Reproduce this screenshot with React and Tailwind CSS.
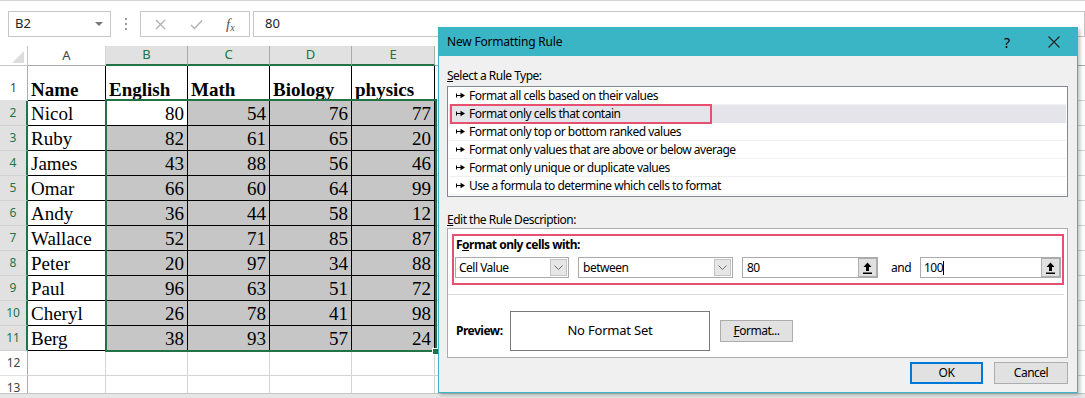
import React from 'react'

const tableHead = ['Name', 'English', 'Math', 'Biology', 'physics']
const tableRows = [
  ['Nicol', 80, 54, 76, 77],
  ['Ruby', 82, 61, 65, 20],
  ['James', 43, 88, 56, 46],
  ['Omar', 66, 60, 64, 99],
  ['Andy', 36, 44, 58, 12],
  ['Wallace', 52, 71, 85, 87],
  ['Peter', 20, 97, 34, 88],
  ['Paul', 96, 63, 51, 72],
  ['Cheryl', 26, 78, 41, 98],
  ['Berg', 38, 93, 57, 24],
]
// só as colunas visíveis levam letra; o resto fica atrás do diálogo
const letters = ['A', 'B', 'C', 'D', 'E', '', '', '', '', '', '', '', '']

const ruleTypes = [
  'Format all cells based on their values',
  'Format only cells that contain',
  'Format only top or bottom ranked values',
  'Format only values that are above or below average',
  'Format only unique or duplicate values',
  'Use a formula to determine which cells to format',
]

const Arrow = () => (
  <svg width="9" height="7" viewBox="0 0 9 7" className="shrink-0">
    <path d="M0.5 1.5 V5.5 M0.5 3.5 H5" stroke="#000" strokeWidth="1" />
    <polygon points="4.5,0.8 9,3.5 4.5,6.2" fill="#000" />
  </svg>
)

const Chevron = () => (
  <div className="w-[17px] h-[17px] mr-[1px] bg-[#e6e6e6] border border-[#c3c3c3] flex items-center justify-center">
    <svg width="9" height="5" viewBox="0 0 9 5">
      <path d="M0.5 0.5 L4.5 4.5 L8.5 0.5" stroke="#6d6d6d" strokeWidth="1" fill="none" />
    </svg>
  </div>
)

const CollapseBtn = () => (
  <div className="w-[19px] h-[19px] bg-[#e1e1e1] border border-[#adadad] flex items-center justify-center">
    <svg width="9" height="12" viewBox="0 0 9 12">
      <path d="M4.5 0.5 L0.5 5 H3 V9 H6 V5 H8.5 Z" fill="#000" />
      <rect x="0" y="10.5" width="9" height="1.5" fill="#000" />
    </svg>
  </div>
)

const colWidths = [28, 78, 82, 82, 82, 83, 82, 82, 82, 82, 82, 82, 82, 82]

const HeaderRow = () => (
  <div className="flex h-[20px]">
    <div className="w-[28px] shrink-0 bg-white border-r border-b border-[#c6c6c6] relative">
      <svg width="12" height="12" viewBox="0 0 12 12" className="absolute right-[3px] bottom-[2px]">
        <polygon points="12,0 12,12 0,12" fill="#dcdcdc" />
      </svg>
    </div>
    {letters.map((l, i) => {
      const sel = i >= 1 && i <= 4
      return (
        <div
          key={i}
          style={{ width: colWidths[i + 1] }}
          className={
            'shrink-0 flex items-center justify-center text-[13px] border-r ' +
            (sel
              ? 'bg-[#e1e1e1] text-[#217346] border-[#ababab] border-b-2 border-b-[#217346]'
              : 'bg-white text-[#444] border-[#d4d4d4] border-b border-b-[#ababab]')
          }
        >
          {l}
        </div>
      )
    })}
  </div>
)

const RowHead = ({ n, sel, h }) => (
  <div
    className={
      'w-[28px] shrink-0 flex items-end justify-center pb-[3px] text-[12px] border-b ' +
      (sel
        ? 'bg-[#e1e1e1] text-[#217346] border-b-[#d0d0d0] border-r-2 border-r-[#217346]'
        : 'bg-white text-[#444] border-b-[#e1e1e1] border-r border-r-[#ababab]') +
      (h ? ' h-[35px]' : ' h-[25px]')
    }
  >
    {n}
  </div>
)

const Filler = ({ h }) =>
  colWidths.slice(6).map((w, i) => (
    <div key={i} style={{ width: w }} className={'shrink-0 bg-white border-r border-b border-[#d4d4d4] ' + (h ? 'h-[35px]' : 'h-[25px]')} />
  ))

const Sheet = () => (
  <div className="relative h-[347px] overflow-hidden">
    <HeaderRow />
    {/* linha 1 - cabeçalho da tabela */}
    <div className="flex">
      <RowHead n={1} h />
      {tableHead.map((t, i) => (
        <div
          key={t}
          style={{ width: colWidths[i + 1] }}
          className="shrink-0 h-[35px] bg-white border-r border-b border-black flex items-end pl-[3px] pb-[1px] leading-none font-bold text-[19px] font-['Liberation_Serif',serif] text-black"
        >
          {t}
        </div>
      ))}
      <Filler h />
    </div>
    {tableRows.map((r, ri) => (
      <div key={ri} className="flex">
        <RowHead n={ri + 2} sel />
        {r.map((v, ci) => {
          const shaded = ci > 0 && !(ri === 0 && ci === 1)
          return (
            <div
              key={ci}
              style={{ width: colWidths[ci + 1] }}
              className={
                'shrink-0 h-[25px] border-r border-b border-black flex items-center text-[19px] font-["Liberation_Serif",serif] text-black leading-none pt-[1px] ' +
                (ci === 0 ? 'pl-[3px] ' : 'justify-end pr-[3px] ') +
                (shaded ? 'bg-[#c6c6c6]' : 'bg-white')
              }
            >
              {v}
            </div>
          )
        })}
        <Filler />
      </div>
    ))}
    {[12, 13].map((n) => (
      <div key={n} className="flex">
        <RowHead n={n} />
        {colWidths.slice(1).map((w, i) => (
          <div key={i} style={{ width: w }} className="shrink-0 h-[25px] bg-white border-r border-b border-[#d4d4d4]" />
        ))}
      </div>
    ))}
    {/* seleção B2:E11 */}
    <div className="absolute left-[105px] top-[53px] w-[332px] h-[253px] border-2 border-[#217346] pointer-events-none" />
    <div className="absolute left-[432px] top-[302px] w-[7px] h-[7px] bg-[#217346] border border-white" />
  </div>
)

const FormulaBar = () => (
  <div className="h-[46px] border-t border-[#d4d4d4] bg-white flex items-start pt-[10px] pl-[8px] gap-0">
    <div className="w-[103px] h-[26px] border border-[#c6c6c6] flex items-center justify-between pl-[6px] pr-[7px] text-[13px] text-[#222]">
      <span>B2</span>
      <svg width="8" height="4" viewBox="0 0 8 4">
        <polygon points="0,0 8,0 4,4" fill="#777" />
      </svg>
    </div>
    <div className="w-[29px] h-[26px] flex flex-col items-center justify-center gap-[3px]">
      <div className="w-[2px] h-[2px] bg-[#999]" />
      <div className="w-[2px] h-[2px] bg-[#999]" />
      <div className="w-[2px] h-[2px] bg-[#999]" />
    </div>
    <div className="w-[110px] h-[26px] border border-[#c6c6c6] flex items-center pl-[14px]">
      <svg width="11" height="11" viewBox="0 0 11 11">
        <path d="M1 1 L10 10 M10 1 L1 10" stroke="#b0b0b0" strokeWidth="1.3" />
      </svg>
      <svg width="13" height="11" viewBox="0 0 13 11" className="ml-[24px]">
        <path d="M1 6 L4.5 9.5 L12 1.5" stroke="#b0b0b0" strokeWidth="1.4" fill="none" />
      </svg>
      <span className="ml-[23px] italic font-['Liberation_Serif',serif] text-[15px] text-[#555]">
        f<sub className="text-[10px]">x</sub>
      </span>
    </div>
    <div className="ml-[3px] flex-1 h-[26px] border border-[#c6c6c6] flex items-center pl-[11px] text-[13px] text-[#222]">
      80
    </div>
  </div>
)

const Dialog = () => (
  <div className="absolute left-[438px] top-[27px] w-[640px] h-[366px] border border-[#3ab5c5] bg-[#f0f0f0] shadow-[2px_2px_4px_rgba(0,0,0,0.25)] font-['Noto_Sans',sans-serif] text-[12px] text-black tracking-[-0.5px] flex flex-col">
    <div className="h-[28px] bg-[#3ab5c5] flex items-center pl-[8px] text-[12px] tracking-[-0.2px]">
      <span className="flex-1">New Formatting Rule</span>
      <span className="w-[14px] text-[14px] mr-[30px]">?</span>
      <svg width="12" height="12" viewBox="0 0 12 12" className="mr-[17px]">
        <path d="M0.5 0.5 L11.5 11.5 M11.5 0.5 L0.5 11.5" stroke="#222" strokeWidth="1.1" />
      </svg>
    </div>
    <div className="flex flex-col pl-[8px] pr-[9px]">
      <div className="h-[16px] mt-[12px] leading-[16px]">
        <span className="underline">S</span>elect a Rule Type:
      </div>
      <div className="relative mt-[2px] h-[111px] bg-white border border-[#828790] flex flex-col">
        {ruleTypes.map((t, i) => (
          <div
            key={t}
            className={
              'h-[18px] flex items-center gap-[4px] pl-[7px] mx-[1px] border-b ' +
              (i === 1 ? 'bg-[#e4e4ea] border-[#e4e4ea]' : 'border-[#f0f0f0]')
            }
          >
            <Arrow />
            <span>{t}</span>
          </div>
        ))}
        <div className="absolute left-[2px] top-[17px] w-[262px] h-[20px] border-2 border-[#e8506f]" />
      </div>
      <div className="h-[16px] mt-[15px] leading-[16px]">
        <span className="underline">E</span>dit the Rule Description:
      </div>
      <div className="h-[130px] bg-white border border-[#acacac] flex flex-col">
        <div className="mt-[5px] ml-[4px] mr-[3px] h-[51px] border-2 border-[#e8506f] flex flex-col pt-[1px]">
          <div className="h-[16px] leading-[16px] font-bold pl-[2px]">
            F<span className="underline">o</span>rmat only cells with:
          </div>
          <div className="mt-[4px] h-[21px] flex items-center pl-[1px]">
            <div className="w-[114px] h-[21px] border border-[#ababab] flex items-center justify-between pl-[3px]">
              <span>Cell Value</span>
              <Chevron />
            </div>
            <div className="ml-[9px] w-[155px] h-[21px] border border-[#ababab] flex items-center justify-between pl-[4px]">
              <span>between</span>
              <Chevron />
            </div>
            <div className="ml-[9px] w-[136px] h-[21px] border border-[#ababab] flex items-center justify-between pl-[4px]">
              <span>80</span>
              <CollapseBtn />
            </div>
            <span className="ml-[13px] w-[29px]">and</span>
            <div className="w-[141px] h-[21px] border border-[#ababab] flex items-center justify-between pl-[3px]">
              <span className="flex items-center">
                100<span className="inline-block w-[1px] h-[14px] bg-black" />
              </span>
              <CollapseBtn />
            </div>
          </div>
        </div>
        <div className="mt-[9px] mr-[3px] h-[1px] bg-[#d9d9d9]" />
        <div className="mt-[16px] flex items-center pl-[8px]">
          <span className="font-bold w-[54px]">Preview:</span>
          <div className="w-[200px] h-[40px] border border-[#7a7a7a] flex items-center justify-center text-[13px] tracking-[-0.2px]">
            No Format Set
          </div>
          <div className="ml-[10px] w-[73px] h-[22px] bg-[#e1e1e1] border border-[#adadad] flex items-center justify-center">
            <span className="underline">F</span>ormat...
          </div>
        </div>
      </div>
      <div className="mt-[4px] flex justify-end">
        <div className="w-[73px] h-[22px] bg-[#e1e1e1] border-2 border-[#0078d7] flex items-center justify-center">OK</div>
        <div className="ml-[11px] w-[74px] h-[22px] bg-[#e1e1e1] border border-[#adadad] flex items-center justify-center">
          Cancel
        </div>
      </div>
    </div>
  </div>
)

export default function App() {
  return (
    <div className="relative w-[1085px] h-[398px] overflow-hidden bg-white font-['Noto_Sans',sans-serif]">
      <FormulaBar />
      <Sheet />
      <div className="h-[5px] bg-[#e6e6e6] border-t border-[#c6c6c6]" />
      <Dialog />
    </div>
  )
}
